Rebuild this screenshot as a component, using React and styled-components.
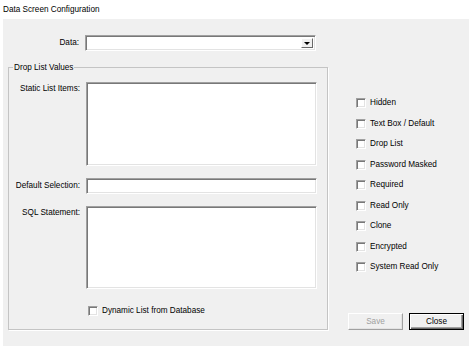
import React from "react";
import styled, { createGlobalStyle } from "styled-components";

const GlobalStyle = createGlobalStyle`
  html, body {
    margin: 0;
    padding: 0;
    background: #ffffff;
  }
  body {
    font-family: "Liberation Sans", Arial, sans-serif;
    font-size: 8.2px;
    color: #000000;
  }
`;

const FLAGS = [
  "Hidden",
  "Text Box / Default",
  "Drop List",
  "Password Masked",
  "Required",
  "Read Only",
  "Clone",
  "Encrypted",
  "System Read Only",
];

export default function App() {
  return (
    <>
      <GlobalStyle />
      <Window>
        <TitleBar>Data Screen Configuration</TitleBar>
        <Client>
          <FieldRow>
            <FieldLabel>Data:</FieldLabel>
            <Combo>
              <ComboButton>
                <Arrow />
              </ComboButton>
            </Combo>
          </FieldRow>

          <Main>
            <Group>
              <Legend>Drop List Values</Legend>
              <GroupBody>
                <FieldRow $top>
                  <FieldLabel $top>Static List Items:</FieldLabel>
                  <TextBox $height={84} />
                </FieldRow>
                <FieldRow>
                  <FieldLabel>Default Selection:</FieldLabel>
                  <TextBox $height={16} />
                </FieldRow>
                <FieldRow $top>
                  <FieldLabel $top>SQL Statement:</FieldLabel>
                  <TextBox $height={83} />
                </FieldRow>
                <DynamicRow>
                  <CheckItem>
                    <CheckBox />
                    Dynamic List from Database
                  </CheckItem>
                </DynamicRow>
              </GroupBody>
            </Group>

            <Side>
              <CheckList>
                {FLAGS.map((f) => (
                  <CheckRow key={f}>
                    <CheckItem>
                      <CheckBox />
                      {f}
                    </CheckItem>
                  </CheckRow>
                ))}
              </CheckList>
              <ButtonBar>
                <Button disabled>Save</Button>
                <Button $default>Close</Button>
              </ButtonBar>
            </Side>
          </Main>
        </Client>
      </Window>
    </>
  );
}

const Window = styled.div`
  width: 474px;
  height: 350px;
  display: flex;
  flex-direction: column;
  background: #ffffff;
  overflow: hidden;
`;

const TitleBar = styled.div`
  height: 19px;
  line-height: 19px;
  padding-left: 3px;
  box-sizing: border-box;
`;

const Client = styled.div`
  margin: 0 5px 4px 3px;
  height: 327px;
  box-sizing: border-box;
  background: #f0f0f0;
  padding: 16px 5px 16px 5px;
  display: flex;
  flex-direction: column;
`;

const FieldRow = styled.div`
  display: grid;
  grid-template-columns: 71px 231px;
  column-gap: 6px;
  align-items: ${(p) => (p.$top ? "start" : "center")};
`;

const FieldLabel = styled.div`
  text-align: right;
  white-space: nowrap;
  line-height: 10px;
  padding-top: ${(p) => (p.$top ? "2px" : "0")};
`;

const sunken = `
  box-sizing: border-box;
  background: #ffffff;
  border: 1px solid;
  border-color: #a0a0a0 #ffffff #ffffff #a0a0a0;
  box-shadow: inset 1px 1px 0 #787878, inset -1px -1px 0 #e3e3e3;
`;

const Combo = styled.div`
  ${sunken}
  height: 16px;
  display: flex;
  justify-content: flex-end;
  padding: 2px;
`;

const ComboButton = styled.div`
  width: 12px;
  height: 100%;
  box-sizing: border-box;
  background: #f0f0f0;
  border: 1px solid;
  border-color: #ffffff #696969 #696969 #ffffff;
  display: flex;
  align-items: center;
  justify-content: center;
`;

const Arrow = styled.div`
  width: 0;
  height: 0;
  border-left: 3px solid transparent;
  border-right: 3px solid transparent;
  border-top: 3px solid #000000;
`;

const Main = styled.div`
  margin-top: 11px;
  flex: 1;
  display: flex;
  align-items: stretch;
`;

const Group = styled.fieldset`
  width: 320px;
  box-sizing: border-box;
  margin: 0;
  padding: 0 11px 0 0;
  border: 1px solid #c4c4c4;
  box-shadow: 1px 1px 0 #ffffff;
  min-width: 0;
`;

const Legend = styled.legend`
  margin-left: 4px;
  padding: 0 1px;
  line-height: 11px;
`;

const GroupBody = styled.div`
  padding-top: 9px;
  display: flex;
  flex-direction: column;
  gap: 12px;
`;

const TextBox = styled.div`
  ${sunken}
  height: ${(p) => p.$height}px;
`;

const DynamicRow = styled.div`
  padding-left: 79px;
  margin-top: 5px;
`;

const CheckItem = styled.label`
  display: inline-flex;
  align-items: center;
  gap: 4px;
  white-space: nowrap;
  line-height: 10px;
`;

const CheckBox = styled.span`
  width: 10px;
  height: 10px;
  box-sizing: border-box;
  background: #ffffff;
  border: 1px solid;
  border-color: #a0a0a0 #ffffff #ffffff #a0a0a0;
  box-shadow: inset 1px 1px 0 #787878, inset -1px -1px 0 #e3e3e3;
  flex: none;
`;

const Side = styled.div`
  flex: 1;
  display: flex;
  flex-direction: column;
  justify-content: space-between;
  padding-top: 31px;
`;

const CheckList = styled.div`
  display: flex;
  flex-direction: column;
  padding-left: 28px;
`;

const CheckRow = styled.div`
  height: 20.5px;
  display: flex;
  align-items: center;
`;

const ButtonBar = styled.div`
  display: flex;
  justify-content: flex-end;
  gap: 6px;
`;

const Button = styled.button`
  width: 55px;
  height: 17px;
  box-sizing: border-box;
  padding: 0;
  font-family: inherit;
  font-size: 8.2px;
  background: #f0f0f0;
  color: #000000;
  border: 1px solid;
  border-color: #ffffff #696969 #696969 #ffffff;
  box-shadow: inset -1px -1px 0 #a0a0a0;

  &:disabled {
    color: #a0a0a0;
    border-color: #ffffff #a0a0a0 #a0a0a0 #ffffff;
    box-shadow: inset -1px -1px 0 #e3e3e3;
  }

  ${(p) =>
    p.$default &&
    `
    border: 1px solid #000000;
    box-shadow: inset 1px 1px 0 #ffffff, inset -1px -1px 0 #696969, inset -2px -2px 0 #a0a0a0;
  `}
`;
